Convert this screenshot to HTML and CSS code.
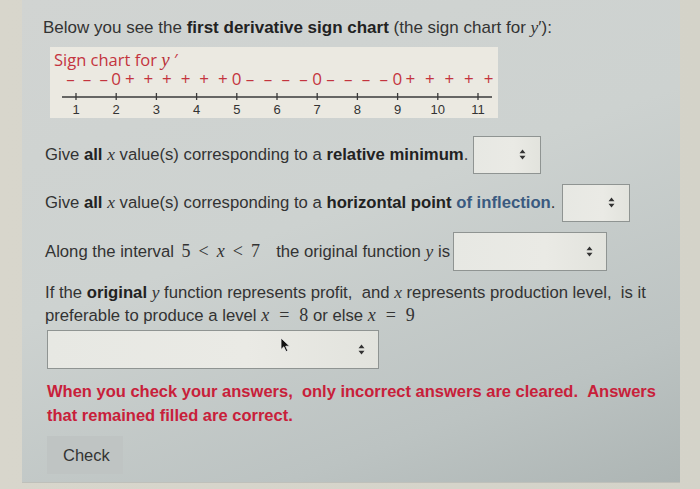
FILE: index.html
```html
<!DOCTYPE html>
<html>
<head>
<meta charset="utf-8">
<link rel="stylesheet" href="styles.css">
</head>
<body>
<div class="screen">
  <div class="content">
    <p class="intro">Below you see the <b>first derivative sign chart</b> (the sign chart for <i class="m">y</i>′):</p>

    <div class="chart">
      <div class="chart-title">Sign chart for <i class="m">y</i> ′</div>
      <div class="signs">
        <span class="seg seg-a"><span>–</span><span>–</span><span>–</span></span>
        <span class="zero">0</span>
        <span class="seg seg-b"><span>+</span><span>+</span><span>+</span><span>+</span><span>+</span><span>+</span></span>
        <span class="zero">0</span>
        <span class="seg seg-c"><span>–</span><span>–</span><span>–</span><span>–</span></span>
        <span class="zero">0</span>
        <span class="seg seg-c"><span>–</span><span>–</span><span>–</span><span>–</span></span>
        <span class="zero">0</span>
        <span class="seg seg-e"><span>+</span><span>+</span><span>+</span><span>+</span><span>+</span></span>
      </div>
      <svg class="axis" width="448" height="30" viewBox="0 0 448 30">
        <line x1="12" y1="9" x2="442" y2="9" stroke="#3a3a3a" stroke-width="1.6"/>
        <g stroke="#3a3a3a" stroke-width="1.3">
          <line x1="26" y1="5" x2="26" y2="12"/>
          <line x1="66.2" y1="5" x2="66.2" y2="12"/>
          <line x1="106.4" y1="5" x2="106.4" y2="12"/>
          <line x1="146.6" y1="5" x2="146.6" y2="12"/>
          <line x1="186.8" y1="5" x2="186.8" y2="12"/>
          <line x1="227" y1="5" x2="227" y2="12"/>
          <line x1="267.2" y1="5" x2="267.2" y2="12"/>
          <line x1="307.4" y1="5" x2="307.4" y2="12"/>
          <line x1="347.6" y1="5" x2="347.6" y2="12"/>
          <line x1="387.8" y1="5" x2="387.8" y2="12"/>
          <line x1="428" y1="5" x2="428" y2="12"/>
        </g>
        <g class="axis-num" text-anchor="middle">
          <text x="26" y="26">1</text>
          <text x="66.2" y="26">2</text>
          <text x="106.4" y="26">3</text>
          <text x="146.6" y="26">4</text>
          <text x="186.8" y="26">5</text>
          <text x="227" y="26">6</text>
          <text x="267.2" y="26">7</text>
          <text x="307.4" y="26">8</text>
          <text x="347.6" y="26">9</text>
          <text x="387.8" y="26">10</text>
          <text x="428" y="26">11</text>
        </g>
      </svg>
    </div>

    <div class="q q1">
      <span>Give <b>all</b> <i class="m">x</i> value(s) corresponding to a <b>relative minimum</b>.</span>
      <div class="select sel-1"><svg class="arr" width="7" height="11" viewBox="0 0 7 11"><path d="M3.5 0.5 L6.5 4.2 L0.5 4.2 Z M3.5 10.5 L6.5 6.8 L0.5 6.8 Z" fill="#333"/></svg></div>
    </div>

    <div class="q q2">
      <span>Give <b>all</b> <i class="m">x</i> value(s) corresponding to a <b>horizontal point</b> <b class="blue">of inflection</b>.</span>
      <div class="select sel-2"><svg class="arr" width="7" height="11" viewBox="0 0 7 11"><path d="M3.5 0.5 L6.5 4.2 L0.5 4.2 Z M3.5 10.5 L6.5 6.8 L0.5 6.8 Z" fill="#333"/></svg></div>
    </div>

    <div class="q q3">
      <span>Along the interval <span class="mr math-int">5<span class="rel">&lt;</span><i>x</i><span class="rel">&lt;</span>7</span>&nbsp; the original function <i class="m">y</i> is</span>
      <div class="select sel-3"><svg class="arr" width="7" height="11" viewBox="0 0 7 11"><path d="M3.5 0.5 L6.5 4.2 L0.5 4.2 Z M3.5 10.5 L6.5 6.8 L0.5 6.8 Z" fill="#333"/></svg></div>
    </div>

    <p class="para">If the <b>original</b> <i class="m">y</i> function represents profit, &nbsp;and <i class="m">x</i> represents production level, &nbsp;is it preferable to produce a level <span class="mr"><i>x</i><span class="rel eq">=</span>8</span> or else <span class="mr"><i>x</i><span class="rel eq">=</span>9</span></p>

    <div class="select sel-wide"><svg class="arr" width="7" height="11" viewBox="0 0 7 11"><path d="M3.5 0.5 L6.5 4.2 L0.5 4.2 Z M3.5 10.5 L6.5 6.8 L0.5 6.8 Z" fill="#333"/></svg>
      <svg class="cursor" width="12" height="16" viewBox="0 0 12 16"><path d="M1 1 L1 12.5 L3.8 9.8 L6 14.6 L7.8 13.8 L5.7 9.2 L9.6 9.2 Z" fill="#111" stroke="#eee" stroke-width="0.8"/></svg>
    </div>

    <p class="warn">When you check your answers, &nbsp;only incorrect answers are cleared. &nbsp;Answers that remained filled are correct.</p>

    <button class="check">Check</button>
  </div>
</div>
</body>
</html>
```

FILE: styles.css
```css
html, body {
  margin: 0;
  padding: 0;
}
body {
  width: 700px;
  height: 489px;
  overflow: hidden;
  background: linear-gradient(90deg, #d8d6cc 0%, #d4d3c9 100%);
  font-family: "Liberation Sans", Arial, sans-serif;
  color: #333;
}
.screen {
  margin-left: 22px;
  width: 658px;
  height: 482px;
  background: linear-gradient(160deg, #d1d4d2 0%, #cdd2d0 45%, #bcc3c2 80%, #adb5b4 100%);
  border-bottom: 1px solid #bfc0ba;
}
.content {
  padding: 18px 0 0 23px;
}
.intro {
  margin: 0 0 0 -2px;
  font-size: 17px;
  line-height: 20px;
  color: #333;
  white-space: nowrap;
}
.intro b { color: #222; }
.m {
  font-family: "Liberation Serif", "Times New Roman", serif;
  font-style: italic;
  font-size: 17.5px;
  line-height: 1;
}
.mr {
  font-family: "Liberation Serif", "Times New Roman", serif;
  font-size: 18px;
  line-height: 1;
  color: #333;
}
.math-int {
  margin-left: 3px;
  margin-right: 7px;
}
.rel {
  margin: 0 8px;
}
.rel.eq {
  margin: 0 10px;
}
.chart {
  margin: 9px 0 0 5px;
  width: 448px;
  height: 71px;
  background: #ebe9e1;
  box-sizing: border-box;
  padding-top: 2px;
}
.chart-title {
  font-family: "Open Sans", "Noto Sans", sans-serif;
  color: #c4343e;
  font-size: 16.5px;
  line-height: 21px;
  padding-left: 4px;
}
.chart-title .m {
  font-size: 19px;
  color: #b8323a;
}
.signs {
  display: flex;
  margin-left: 8px;
  height: 17px;
  font-family: "Open Sans", "Noto Sans", sans-serif;
  font-size: 17px;
  line-height: 17px;
  color: #c4343e;
}
.seg {
  display: flex;
  justify-content: space-evenly;
}
.seg-a { width: 58px; }
.seg-b { width: 120.6px; }
.seg-c { width: 80.4px; }
.seg-e { width: 96px; justify-content: space-between; padding-left: 8px; box-sizing: border-box; }
.zero {
  width: 0;
  display: flex;
  justify-content: center;
}
.axis {
  display: block;
  margin-top: 1px;
}
.axis-num {
  font-family: "Liberation Sans", Arial, sans-serif;
  font-size: 13px;
  fill: #333;
}
.q {
  display: flex;
  align-items: center;
  font-size: 16.7px;
  color: #333;
  height: 39px;
  white-space: nowrap;
}
.q b { color: #222; }
.q .blue { color: #3a5a80; }
.q1 { margin-top: 17px; }
.q2 { margin-top: 9px; }
.q3 { margin-top: 10px; }
.select {
  position: relative;
  box-sizing: border-box;
  height: 38px;
  border: 1px solid #8f9492;
  background: linear-gradient(90deg, #e7e8e3 0%, #eaeae5 60%, #e2e3dd 100%);
  display: flex;
  align-items: center;
  justify-content: flex-end;
}
.arr { display: block; }
.sel-1 { width: 68px; margin-left: 5px; padding-right: 14px; }
.sel-2 { width: 68px; margin-left: 7px; padding-right: 14px; }
.sel-3 { width: 154px; margin-left: 3px; padding-right: 13px; height: 39px; }
.para {
  margin: 10px 0 0 0;
  font-size: 16.7px;
  line-height: 23px;
  width: 625px;
  color: #333;
}
.para b { color: #222; }
.sel-wide {
  margin: 3px 0 0 2px;
  width: 332px;
  height: 39px;
  padding-right: 13px;
}
.cursor {
  position: absolute;
  left: 232px;
  top: 6px;
}
.warn {
  margin: 10px 0 0 2px;
  width: 620px;
  font-size: 16.5px;
  line-height: 24px;
  font-weight: bold;
  color: #c8203a;
}
.check {
  display: block;
  margin: 9px 0 0 2px;
  width: 76px;
  height: 38px;
  border: none;
  background: #bfc4c3;
  font-family: "Liberation Sans", Arial, sans-serif;
  font-size: 16.5px;
  color: #333;
  padding: 0 0 0 16px;
  text-align: left;
}
```
